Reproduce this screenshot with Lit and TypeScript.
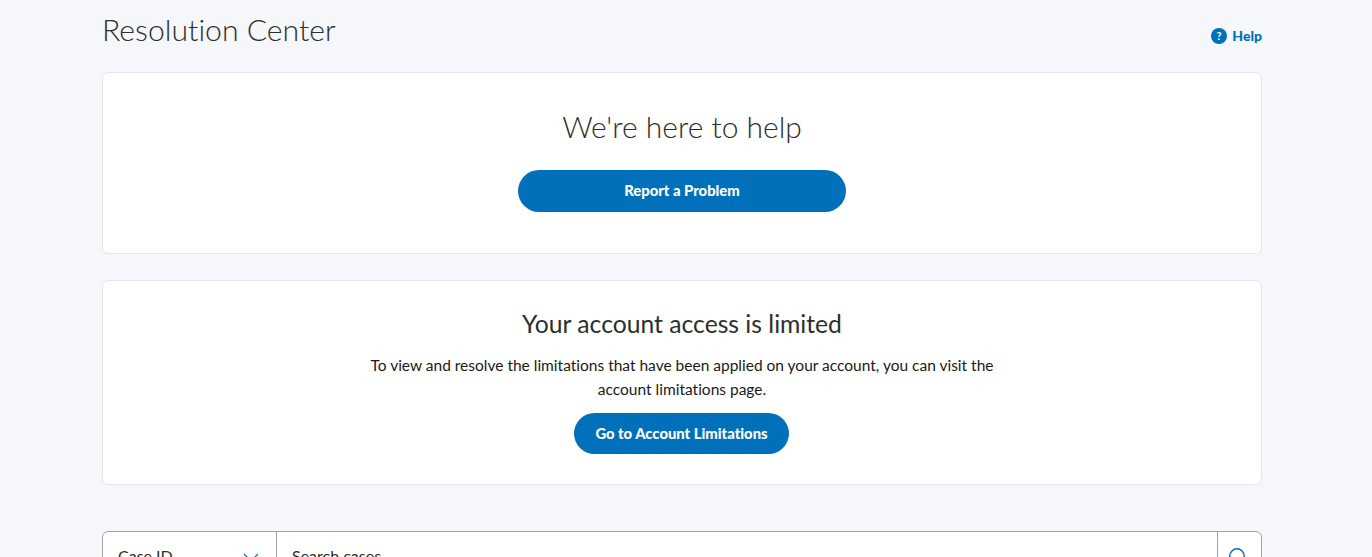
import { LitElement, html, css } from 'lit';
import { customElement } from 'lit/decorators.js';

@customElement('app-root')
export class AppRoot extends LitElement {
  static styles = css`
    :host {
      display: block;
      height: 557px;
      overflow: hidden;
      background: #f5f7fa;
      font-family: 'Lato', 'Noto Sans', sans-serif;
      font-variant-ligatures: none;
      color: #2c2e2f;
    }
    .page {
      width: 1160px;
      margin-left: 102px;
      display: flex;
      flex-direction: column;
    }
    .header {
      display: flex;
      justify-content: space-between;
      height: 72px;
    }
    .title {
      margin: 10px 0 0;
      font-size: 30.2px;
      line-height: 38px;
      font-weight: 300;
      color: #2c2e2f;
    }
    .help {
      display: flex;
      align-items: center;
      gap: 5px;
      height: 18px;
      margin-top: 27px;
      color: #0070ba;
      font-size: 14px;
      font-weight: 900;
      text-decoration: none;
    }
    .help span {
      position: relative;
      top: -1px;
    }
    .card {
      background: #fff;
      border: 1px solid #e4e7eb;
      border-radius: 6px;
      box-sizing: border-box;
      display: flex;
      flex-direction: column;
      align-items: center;
    }
    .help-card {
      height: 182px;
      padding-top: 33px;
      margin-bottom: 26px;
    }
    .limit-card {
      height: 205px;
      padding-top: 28px;
      margin-bottom: 46px;
    }
    .help-title {
      margin: 0;
      font-size: 30px;
      line-height: 40px;
      font-weight: 300;
    }
    .limit-title {
      margin: 0;
      font-size: 24.7px;
      line-height: 30px;
      font-weight: 400;
    }
    .limit-text {
      margin: 14px 0 0;
      width: 640px;
      font-size: 15.5px;
      line-height: 24px;
      text-align: center;
      color: #1a1a1a;
    }
    .btn {
      border: 0;
      border-radius: 21px;
      background: #0070ba;
      color: #fff;
      font-family: inherit;
      font-variant-ligatures: none;
      font-size: 14.8px;
      font-weight: 900;
      line-height: 18px;
      height: 42px;
      padding: 0 0 2px;
    }
    .btn-report {
      width: 328px;
      margin-top: 24px;
    }
    .btn-limits {
      width: 215px;
      height: 41px;
      margin: 12px 1px 0 0;
    }
    .search {
      display: flex;
      height: 60px;
      background: #fff;
      border: 1px solid #9da3a6;
      border-radius: 6px;
      box-sizing: border-box;
    }
    .select {
      width: 174px;
      box-sizing: border-box;
      padding: 13px 15px 0;
      display: flex;
      justify-content: space-between;
      border-right: 1px solid #9da3a6;
      font-size: 16px;
      line-height: 22px;
    }
    .chevron {
      margin: 8px 2px 0 0;
    }
    .input {
      flex: 1;
      padding: 13px 15px 0;
      font-size: 16px;
      line-height: 22px;
      color: #2c2e2f;
    }
    .submit {
      width: 44px;
      box-sizing: border-box;
      border-left: 1px solid #9da3a6;
      padding: 15px 0 0 10px;
    }
  `;

  render() {
    return html`
      <div class="page">
        <div class="header">
          <h1 class="title">Resolution Center</h1>
          <a class="help" href="#">
            <svg width="16" height="16" viewBox="0 0 16 16">
              <circle cx="8" cy="8" r="8" fill="#0070ba"></circle>
              <text
                x="8"
                y="12"
                text-anchor="middle"
                font-size="11"
                font-weight="700"
                font-family="Lato, sans-serif"
                fill="#fff"
              >?</text>
            </svg>
            <span>Help</span>
          </a>
        </div>

        <section class="card help-card">
          <h2 class="help-title">We're here to help</h2>
          <button class="btn btn-report">Report a Problem</button>
        </section>

        <section class="card limit-card">
          <h2 class="limit-title">Your account access is limited</h2>
          <p class="limit-text">
            To view and resolve the limitations that have been applied on your
            account, you can visit the account limitations page.
          </p>
          <button class="btn btn-limits">Go to Account Limitations</button>
        </section>

        <div class="search">
          <div class="select">
            <span>Case ID</span>
            <svg class="chevron" width="16" height="9" viewBox="0 0 16 9">
              <path d="M1 1l7 7 7-7" fill="none" stroke="#0070ba" stroke-width="1.2"></path>
            </svg>
          </div>
          <div class="input">Search cases</div>
          <div class="submit">
            <svg width="20" height="20" viewBox="0 0 20 20">
              <circle cx="9" cy="9" r="7.2" fill="none" stroke="#0070ba" stroke-width="1.4"></circle>
              <path d="M14 14l5 5" stroke="#0070ba" stroke-width="1.4"></path>
            </svg>
          </div>
        </div>
      </div>
    `;
  }
}
